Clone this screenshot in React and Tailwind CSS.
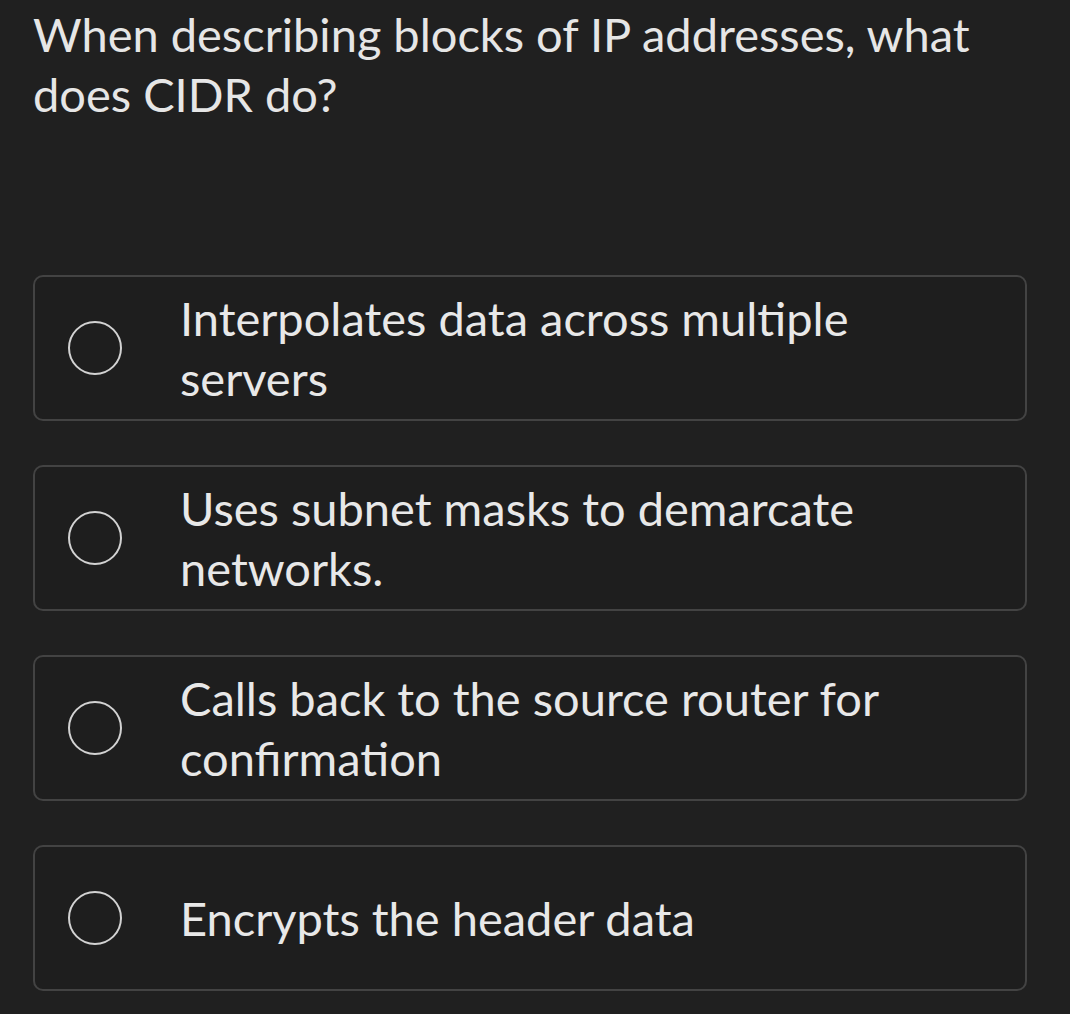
import React from 'react';

const options = [
  'Interpolates data across multiple servers',
  'Uses subnet masks to demarcate networks.',
  'Calls back to the source router for confirmation',
  'Encrypts the header data',
];

const Option = ({ label }) => (
  <div className="flex h-[146px] items-center rounded-[10px] border-2 border-[#434343] bg-[#1e1e1e] pl-[33px]">
    <div className="h-[54px] w-[54px] shrink-0 rounded-full border-2 border-[#d2d2d2]" />
    <div className="ml-[58px] max-w-[760px] text-[47px] leading-[60px] text-[#e8e8e8]">{label}</div>
  </div>
);

export default function App() {
  return (
    <div
      className="min-h-[1014px] bg-[#202020] px-[33px] pt-[4px]"
      style={{ fontFamily: 'Lato, "Noto Sans", sans-serif' }}
    >
      <h1 className="text-[47px] leading-[60px] text-[#e6e6e6]">
        When describing blocks of IP addresses, what does CIDR do?
      </h1>
      <div className="mt-[151px] flex flex-col gap-[44px] pr-[10px]">
        {options.map((o) => (
          <Option key={o} label={o} />
        ))}
      </div>
    </div>
  );
}
